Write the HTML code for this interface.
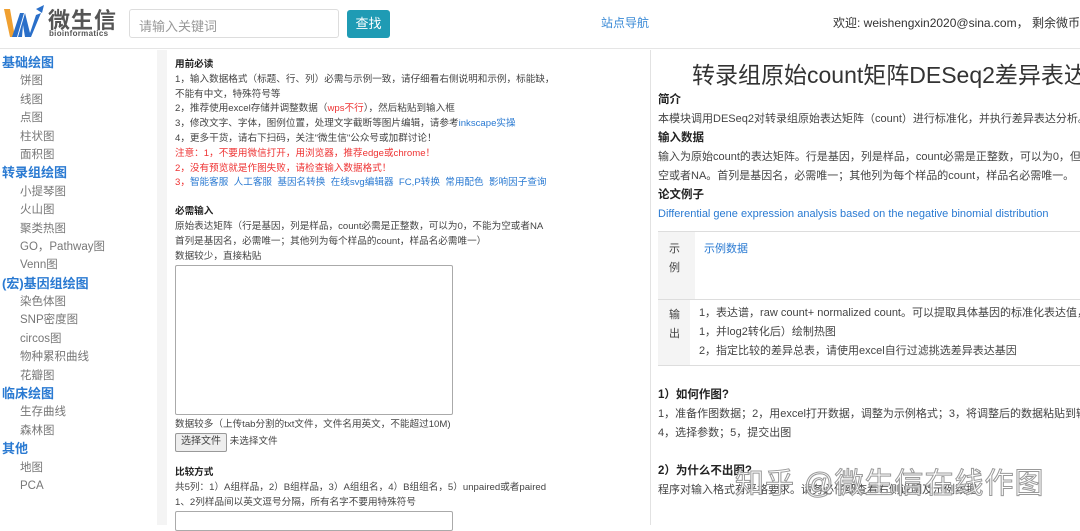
<!DOCTYPE html>
<html><head><meta charset="utf-8"><style>
*{margin:0;padding:0;box-sizing:border-box}
body{width:1080px;height:525px;overflow:hidden;background:#fff;font-family:"Liberation Sans","Noto Sans CJK SC",sans-serif;color:#333;position:relative}
.hdr{position:absolute;left:0;top:0;width:1080px;height:49px;border-bottom:1px solid #e5e5e5;background:#fff}
.logo{position:absolute;left:3px;top:3px}
.lt{position:absolute;left:48px;top:3px;font-size:22px;font-weight:bold;color:#555;letter-spacing:1px}
.ls{position:absolute;left:49px;top:29px;font-size:8px;font-weight:bold;color:#555;letter-spacing:.3px}
.search{position:absolute;left:129px;top:9px;width:210px;height:29px;border:1px solid #ddd;border-radius:3px;font-size:13px;color:#999;padding:6px 9px}
.btn{position:absolute;left:347px;top:10px;width:43px;height:28px;background:#1f9bb4;border-radius:3px;color:#fff;font-size:13px;text-align:center;line-height:28px}
.nav{position:absolute;left:601px;top:14px;font-size:12px;color:#3a8ad6}
.wel{position:absolute;left:833px;top:14px;font-size:12px;color:#333;white-space:nowrap}
.side{position:absolute;left:0;top:50px;width:157px;height:475px;background:#fff;padding-top:4px}
.side div{font-size:11.5px;color:#777;padding-left:20px;height:18.4px;line-height:18.4px}
.side .h{font-size:13px;font-weight:bold;color:#2a7ad2;padding-left:2px}
.strip{position:absolute;left:157px;top:50px;width:10px;height:475px;background:#f4f4f4}
.mid{position:absolute;left:167px;top:50px;width:483px;height:475px;background:#fff;font-size:9.6px;line-height:14.8px;color:#444;padding:8px 0 0 8px}
.mid b{color:#222}
.red{color:#e33}.blue{color:#2a7ad2}
.ta{width:278px;height:150px;border:1px solid #aaa;border-radius:2px;margin-top:1px}
.fb{display:inline-block;border:1px solid #999;background:#eee;border-radius:2px;padding:1px 5px;font-size:10px}
.right{position:absolute;left:650px;top:50px;width:430px;height:475px;border-left:1px solid #e2e2e2;background:#fff;padding-left:7px;font-size:11px;color:#444}
.title{font-size:23px;color:#333;white-space:nowrap;margin:9px 0 0 34px;line-height:32px}
.right h4{font-size:11.5px;color:#222;line-height:19px}
.right p{line-height:19px;white-space:nowrap}
.tbl{margin-top:7px;border-top:1px solid #ddd;border-bottom:1px solid #ddd;width:430px}
.row{display:flex;border-bottom:1px solid #ddd}
.row:last-child{border-bottom:0}
.lab{width:37px;background:#f4f4f4;padding:8px 0 0 11px;line-height:19px}
.cnt{padding:6px 0 0 9px;line-height:19px;white-space:nowrap}
.wm{position:absolute;left:735px;top:460px;font-size:29px;color:rgba(255,255,255,.85);-webkit-text-stroke:1px #999;letter-spacing:1px;white-space:nowrap}
</style></head><body>
<div class="hdr">
<svg class="logo" width="44" height="38" viewBox="0 0 44 38"><path d="M1 6 L7 34 L12 34 L7 6Z" fill="#f0a030"/><path d="M9 34 L17 10 L21 10 L14 34Z" fill="#2a6fc9"/><path d="M15 34 L22 10 L27 30 L33 12 L38 10 L28 34 L22 34 L20 22 L19 34Z" fill="#2a6fc9"/><path d="M33 6 L41 2 L39 10Z" fill="#2a6fc9"/></svg>
<div class="lt">微生信</div><div class="ls">bioinformatics</div>
<div class="search">请输入关键词</div><div class="btn">查找</div>
<div class="nav">站点导航</div>
<div class="wel">欢迎: weishengxin2020@sina.com， 剩余微币:</div>
</div>
<div class="side">
<div class="h">基础绘图</div><div>饼图</div><div>线图</div><div>点图</div><div>柱状图</div><div>面积图</div>
<div class="h">转录组绘图</div><div>小提琴图</div><div>火山图</div><div>聚类热图</div><div>GO，Pathway图</div><div>Venn图</div>
<div class="h">(宏)基因组绘图</div><div>染色体图</div><div>SNP密度图</div><div>circos图</div><div>物种累积曲线</div><div>花瓣图</div>
<div class="h">临床绘图</div><div>生存曲线</div><div>森林图</div>
<div class="h">其他</div><div>地图</div><div>PCA</div>
</div>
<div class="strip"></div>
<div class="mid">
<b>用前必读</b><br>
1，输入数据格式（标题、行、列）必需与示例一致，请仔细看右侧说明和示例，标能缺，<br>
不能有中文，特殊符号等<br>
2，推荐使用excel存储并调整数据（<span class="red">wps不行</span>），然后粘贴到输入框<br>
3，修改文字、字体，图例位置，处理文字截断等图片编辑，请参考<span class="blue">inkscape实操</span><br>
4，更多干货，请右下扫码，关注"微生信"公众号或加群讨论！<br>
<span class="red">注意：1，不要用微信打开，用浏览器，推荐edge或chrome！</span><br>
<span class="red">2，没有预览就是作图失败，请检查输入数据格式！</span><br>
<span class="red">3，</span><span class="blue">智能客服&nbsp; 人工客服&nbsp; 基因名转换&nbsp; 在线svg编辑器&nbsp; FC,P转换&nbsp; 常用配色&nbsp; 影响因子查询</span><br>
<div style="height:14px"></div>
<b>必需输入</b><br>
原始表达矩阵（行是基因，列是样品，count必需是正整数，可以为0，不能为空或者NA<br>
首列是基因名，必需唯一；其他列为每个样品的count，样品名必需唯一）<br>
数据较少，直接粘贴
<div class="ta"></div>
<div style="margin-top:3px">数据较多（上传tab分割的txt文件，文件名用英文，不能超过10M)</div>
<div><span class="fb">选择文件</span> 未选择文件</div>
<div style="height:14px"></div>
<b>比较方式</b><br>
共5列：1）A组样品，2）B组样品，3）A组组名，4）B组组名，5）unpaired或者paired<br>
1、2列样品间以英文逗号分隔，所有名字不要用特殊符号
<div class="ta" style="height:20px"></div>
</div>
<div class="right">
<div class="title">转录组原始count矩阵DESeq2差异表达分析</div>
<h4>简介</h4>
<p>本模块调用DESeq2对转录组原始表达矩阵（count）进行标准化，并执行差异表达分析。</p>
<h4>输入数据</h4>
<p>输入为原始count的表达矩阵。行是基因，列是样品，count必需是正整数，可以为0，但是不能为</p>
<p>空或者NA。首列是基因名，必需唯一；其他列为每个样品的count，样品名必需唯一。</p>
<h4>论文例子</h4>
<p class="blue">Differential gene expression analysis based on the negative binomial distribution</p>
<div class="tbl">
<div class="row" style="height:68px"><div class="lab">示<br>例</div><div class="cnt blue" style="padding-top:8px">示例数据</div></div>
<div class="row" style="height:65px"><div class="lab" style="padding-top:6px">输<br>出</div><div class="cnt" style="padding-top:4px">1，表达谱，raw count+ normalized count。可以提取具体基因的标准化表达值，<br>1，并log2转化后）绘制热图<br>2，指定比较的差异总表，请使用excel自行过滤挑选差异表达基因</div></div>
</div>
<h4 style="margin-top:20px">1）如何作图?</h4>
<p>1，准备作图数据；2，用excel打开数据，调整为示例格式；3，将调整后的数据粘贴到输入框</p>
<p>4，选择参数；5，提交出图</p>
<h4 style="margin-top:19px">2）为什么不出图?</h4>
<p>程序对输入格式有严格要求。请务必仔细查看右侧说明及示例数据</p>
</div>
<div class="wm">知乎 @微生信在线作图</div>
</body></html>
